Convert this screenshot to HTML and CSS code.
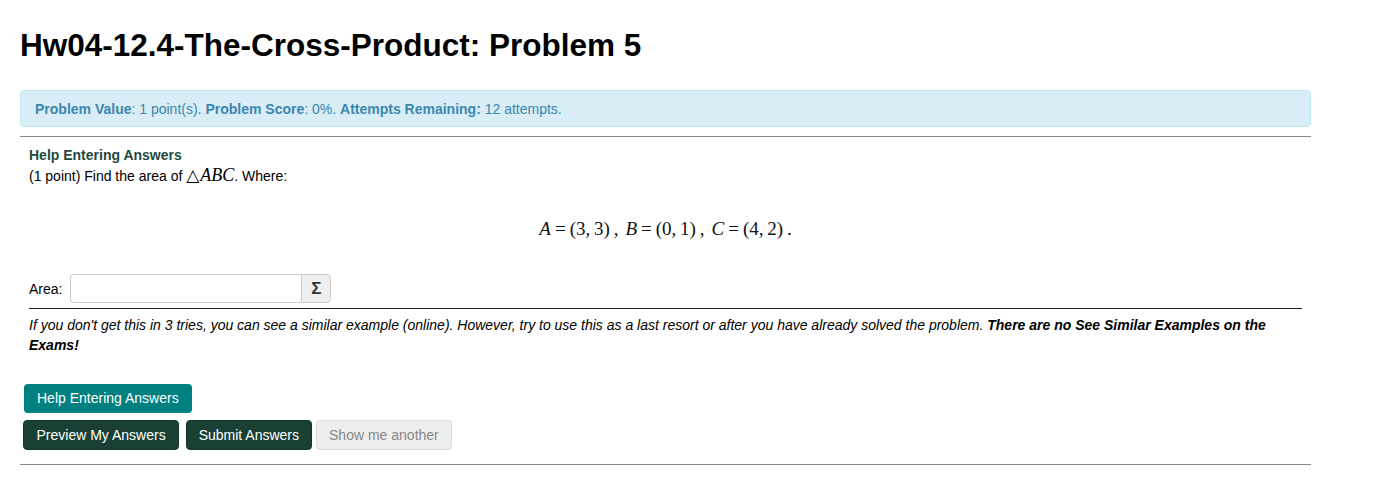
FILE: index.html
```html
<!DOCTYPE html>
<html>
<head>
<meta charset="utf-8">
<link rel="stylesheet" href="styles.css">
</head>
<body>
<div class="page">
  <h1 class="title">Hw04-12.4-The-Cross-Product: Problem 5</h1>
  <div class="alert">
    <b>Problem Value</b>: 1 point(s). <b>Problem Score</b>: 0%. <b>Attempts Remaining:</b> 12 attempts.
  </div>
  <hr class="rule">
  <div class="problem">
    <div class="help-link">Help Entering Answers</div>
    <div class="line">(1 point) Find the area of <span class="math"><span class="tri">△</span><i>ABC</i></span>. Where:</div>
    <div class="display">
      <span class="math big"><i>A</i><span class="op">=</span>(3,&thinsp;3)&thinsp;,<span class="gap"></span><i>B</i><span class="op">=</span>(0,&thinsp;1)&thinsp;,<span class="gap"></span><i>C</i><span class="op">=</span>(4,&thinsp;2)&thinsp;.</span>
    </div>
    <div class="answer-row">
      <span class="label">Area:</span>
      <div class="input-group">
        <input class="answer" type="text">
        <span class="sigma">Σ</span>
      </div>
    </div>
    <hr class="sep">
    <p class="note"><i>If you don't get this in 3 tries, you can see a similar example (online). However, try to use this as a last resort or after you have already solved the problem. <b>There are no See Similar Examples on the Exams!</b></i></p>
  </div>
  <div class="actions">
    <div class="row"><span class="btn teal">Help Entering Answers</span></div>
    <div class="row">
      <span class="btn dark first">Preview My Answers</span>
      <span class="btn dark">Submit Answers</span>
      <span class="btn disabled">Show me another</span>
    </div>
  </div>
  <hr class="rule bottom">
</div>
</body>
</html>
```

FILE: styles.css
```css
html, body {
  margin: 0;
  padding: 0;
  background: #fff;
}
body {
  font-family: "Liberation Sans", Arial, sans-serif;
  font-size: 14px;
  color: #000;
}
.page {
  width: 1291px;
  padding: 0 0 0 20px;
}
.title {
  margin: 0;
  padding-top: 26px;
  font-size: 31.5px;
  font-weight: bold;
  line-height: 38px;
  color: #000;
}
.alert {
  margin-top: 26px;
  box-sizing: border-box;
  height: 37px;
  padding: 10px 14px;
  background: #d9edf7;
  border: 1px solid #bce8f1;
  border-radius: 4px;
  color: #3a87ad;
  line-height: 16px;
}
.rule {
  margin: 9px 0 0 0;
  border: 0;
  border-top: 1px solid #888;
  height: 0;
}
.problem {
  padding: 0 9px;
}
.help-link {
  margin-top: 8px;
  font-weight: bold;
  color: #1f4a3e;
  line-height: 20px;
}
.line {
  line-height: 20px;
}
.math i {
  font-family: "Liberation Serif", serif;
  font-style: italic;
  font-size: 18px;
}
.tri {
  font-family: "DejaVu Sans", sans-serif;
  font-size: 17px;
  margin-right: 1px;
}
.display {
  text-align: center;
  padding-top: 31px;
  height: 24px;
  line-height: 24px;
  margin-bottom: 33px;
}
.math.big {
  font-family: "Liberation Serif", serif;
  font-size: 19px;
  color: #111;
}
.math.big i { font-size: 19px; }
.op { padding: 0 4px; }
.gap { display: inline-block; width: 7px; }
.answer-row {
  display: flex;
  align-items: center;
  gap: 8px;
}
.label { line-height: 20px; }
.input-group {
  display: flex;
  height: 29px;
}
.answer {
  width: 231px;
  box-sizing: border-box;
  height: 29px;
  margin: 0;
  border: 1px solid #ccc;
  border-right: 0;
  border-radius: 4px 0 0 4px;
  padding: 4px 6px;
  font: inherit;
}
.sigma {
  width: 30px;
  box-sizing: border-box;
  height: 29px;
  border: 1px solid #ccc;
  border-radius: 0 4px 4px 0;
  background: #eee;
  display: flex;
  align-items: center;
  justify-content: center;
  font-weight: bold;
  font-size: 17px;
  color: #333;
}
.sep {
  margin: 5px 0 0 0;
  border: 0;
  border-top: 1px solid #222;
  height: 0;
}
.note {
  margin: 6px 0 0 0;
  line-height: 20px;
  color: #000;
}
.actions {
  margin-top: 29px;
  padding-left: 3px;
  display: flex;
  flex-direction: column;
  gap: 7px;
}
.row {
  display: flex;
  gap: 7px;
}
.btn {
  display: inline-block;
  box-sizing: border-box;
  height: 30px;
  line-height: 28px;
  padding: 0 12px;
  border-radius: 4px;
  border: 1px solid transparent;
  font-size: 14px;
}
.teal {
  height: 29px;
  line-height: 27px;
  background: #008080;
  color: #fff;
  margin-left: 1px;
}
.btn.dark {
  background: #1a4036;
  border-color: #153630;
  color: #fff;
  padding: 0 11.5px;
}
.btn.dark.first { padding: 0 12.5px; }
.btn.disabled {
  background: #eee;
  border-color: #ddd;
  color: #888;
  margin-left: -3px;
  padding: 0 12.5px;
}
.bottom {
  margin-top: 14px;
}
```
